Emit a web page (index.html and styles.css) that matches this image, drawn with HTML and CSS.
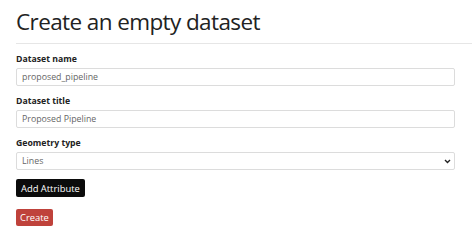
FILE: index.html
```html
<!DOCTYPE html>
<html>
<head>
<meta charset="utf-8">
<link rel="stylesheet" href="styles.css">
</head>
<body>
<div class="page">
  <h1 class="title">Create an empty dataset</h1>
  <div class="rule"></div>
  <form class="form">
    <label class="label">Dataset name</label>
    <input class="field" type="text" value="proposed_pipeline">
    <label class="label">Dataset title</label>
    <input class="field" type="text" value="Proposed Pipeline">
    <label class="label">Geometry type</label>
    <div class="select">
      <span>Lines</span>
      <svg class="chev" width="7" height="5" viewBox="0 0 7 5"><path d="M1 1 L3.5 3.5 L6 1" fill="none" stroke="#222" stroke-width="1.4"/></svg>
    </div>
    <div class="actions">
      <button type="button" class="btn btn-dark">Add Attribute</button>
      <button type="button" class="btn btn-red">Create</button>
    </div>
  </form>
</div>
</body>
</html>
```
FILE: styles.css
```css
html, body { margin: 0; padding: 0; background: #fff; }
body { font-family: "Open Sans", "DejaVu Sans", sans-serif; color: #222; }
.page { padding: 8px 0 0 16px; }
.title {
  margin: 0;
  font-size: 22.5px;
  font-weight: 400;
  line-height: 28px;
  color: #222;
  letter-spacing: -0.6px;
}
.rule { height: 1px; background: #e6e6e6; margin: 7px 2px 0 0; }
.form { width: 439px; display: flex; flex-direction: column; padding-top: 8px; }
.label {
  display: block;
  font-size: 8.7px;
  font-weight: 700;
  line-height: 14px;
  margin-bottom: 2px;
  color: #222;
}
.field, .select {
  box-sizing: border-box;
  height: 18px;
  width: 100%;
  border: 1px solid #dcdcdc;
  border-radius: 2px;
  padding: 0 5px;
  font-family: inherit;
  font-size: 8.8px;
  color: #666;
  margin: 0 0 8px 0;
  outline: none;
}
.select {
  display: flex;
  align-items: center;
  justify-content: space-between;
  padding-right: 3px;
  margin-bottom: 9px;
}
.actions { display: flex; flex-direction: column; align-items: flex-start; gap: 12px; }
.btn {
  border: 0;
  border-radius: 2px;
  font-family: inherit;
  font-size: 9.4px;
  color: #fff;
  padding: 0 5px;
  cursor: pointer;
}
.btn-dark { background: #0b0b0b; height: 18px; }
.btn-red { background: #bf423b; height: 17px; padding: 0 4px; }
```
